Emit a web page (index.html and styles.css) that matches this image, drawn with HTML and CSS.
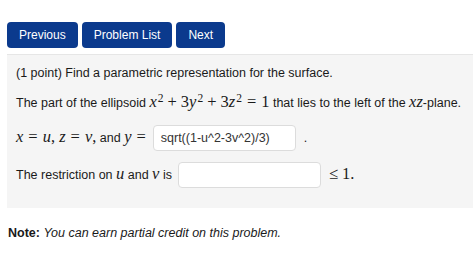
FILE: index.html
```html
<!DOCTYPE html>
<html>
<head>
<meta charset="utf-8">
<link rel="stylesheet" href="styles.css">
</head>
<body>
<div class="page">
  <div class="nav">
    <a class="btn">Previous</a>
    <a class="btn">Problem List</a>
    <a class="btn">Next</a>
  </div>
  <div class="problem">
    <p class="line">(1 point) Find a parametric representation for the surface.</p>
    <p class="line">The part of the ellipsoid <span class="m"><i>x</i><sup>2</sup><span class="op">+</span>3<i>y</i><sup>2</sup><span class="op">+</span>3<i>z</i><sup>2</sup><span class="rel">=</span>1</span> that lies to the left of the <span class="m"><i>xz</i></span>-plane.</p>
    <p class="line row"><span class="m"><i>x</i><span class="rel">=</span><i>u</i>,&nbsp;<i>z</i><span class="rel">=</span><i>v</i>,</span> and <span class="m"><i>y</i><span class="rel">=</span></span><span class="field">sqrt((1-u^2-3v^2)/3)</span><span class="after">.</span></p>
    <p class="line row row4">The restriction on <span class="m"><i>u</i></span> and <span class="m"><i>v</i></span> is<span class="field field2"></span><span class="after m"><span class="le">≤</span>1.</span></p>
  </div>
  <p class="note"><b>Note:</b> <i>You can earn partial credit on this problem.</i></p>
</div>
</body>
</html>
```

FILE: styles.css
```css
html, body {
  margin: 0;
  padding: 0;
  background: #ffffff;
}
body {
  font-family: "Liberation Sans", Arial, sans-serif;
  font-size: 12.5px;
  color: #1a1a1a;
}
.page {
  padding: 22px 0 0 7px;
}
.nav {
  display: flex;
  gap: 4px;
}
.btn {
  display: flex;
  align-items: center;
  justify-content: center;
  height: 26px;
  padding: 0 12px;
  box-sizing: border-box;
  background: #0b3a8d;
  color: #ffffff;
  border-radius: 4px;
  font-size: 12px;
}
.problem {
  margin-top: 6px;
  width: 466px;
  box-sizing: border-box;
  background: #f5f5f5;
  border-top: 1px solid #e6e6e6;
  padding: 9px 9px 21px;
}
.line {
  margin: 0;
  line-height: 18px;
  white-space: nowrap;
}
.line + .line {
  margin-top: 11px;
}
.line.row {
  margin-top: 12px;
  line-height: 26px;
  height: 26px;
}
.line.row4 {
  margin-top: 11px;
}
.m {
  font-family: "Liberation Serif", "Times New Roman", serif;
  font-size: 16.5px;
}
.m sup {
  font-size: 11.5px;
  line-height: 0;
  vertical-align: 0.45em;
  margin-left: 1px;
}
.op {
  margin: 0 4px;
}
.rel {
  margin: 0 5px;
}
.le {
  margin-right: 4px;
}
.field {
  display: inline-block;
  vertical-align: middle;
  box-sizing: border-box;
  width: 143px;
  height: 26px;
  line-height: 24px;
  background: #ffffff;
  border: 1px solid #dcdcdc;
  border-radius: 4px;
  padding: 0 7px;
  margin-left: 2px;
  color: #333333;
  font-size: 12.5px;
  position: relative;
  top: -1px;
}
.field2 {
  margin-left: 6px;
}
.after {
  margin-left: 8px;
}
.note {
  margin: 18px 0 0 1px;
}
```
